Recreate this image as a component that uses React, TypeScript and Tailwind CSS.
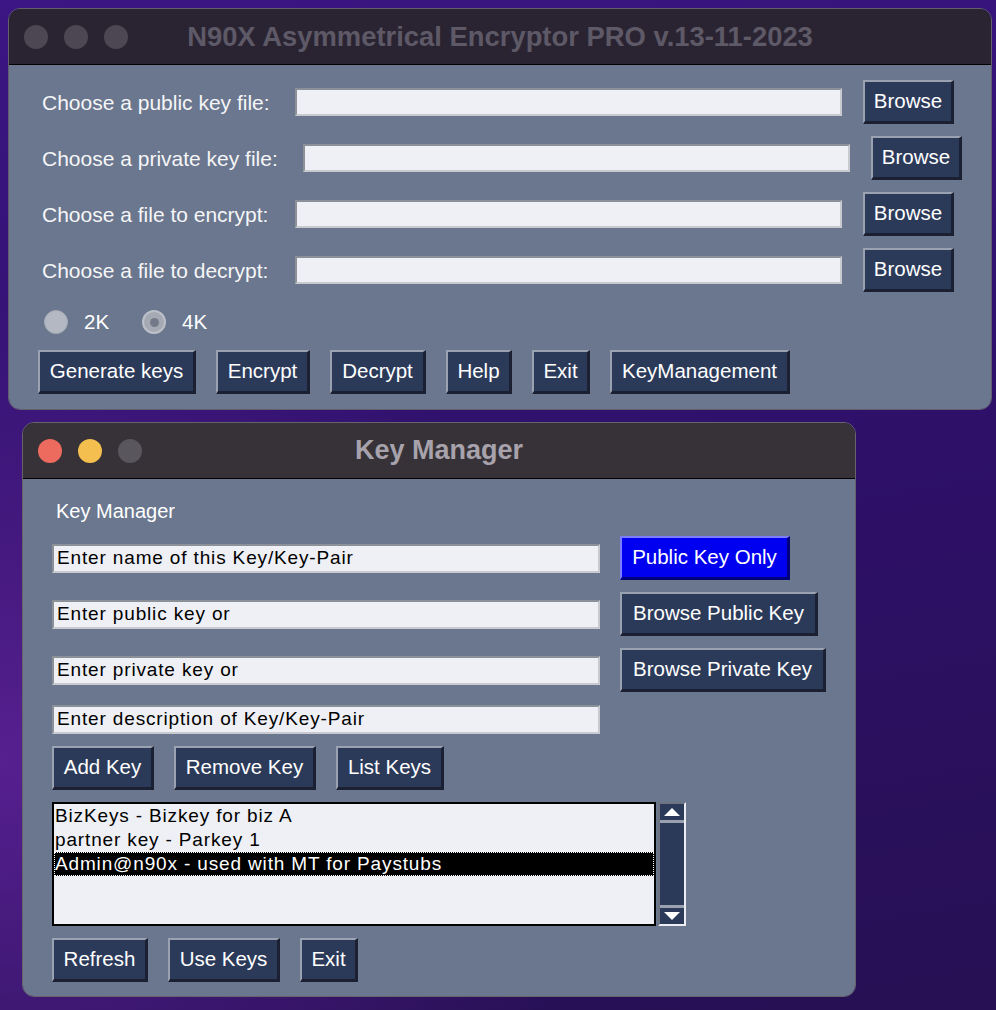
import React from "react";

const btnBase =
  "flex h-[44px] shrink-0 items-center justify-center border-t-2 border-l-2 border-b-[3px] border-r-[3px] text-[20.5px] leading-none text-white";
const navy =
  "bg-[#2c3a5a] border-t-[#9aa1b1] border-l-[#9aa1b1] border-b-[#1b2133] border-r-[#1b2133]";
const blue =
  "bg-[#0000f0] border-t-[#7d7dff] border-l-[#7d7dff] border-b-[#00007a] border-r-[#00007a]";

function TkButton({ label, w, primary }: { label: string; w: string; primary?: boolean }) {
  return <div className={`${btnBase} ${primary ? blue : navy} ${w}`}>{label}</div>;
}

function Lights({ active }: { active?: boolean }) {
  return (
    <div className="flex items-center gap-[16px] pl-[15px]">
      <div className={`h-[24px] w-[24px] rounded-full ${active ? "bg-[#ec6a5e]" : "bg-[#4c4753]"}`} />
      <div className={`h-[24px] w-[24px] rounded-full ${active ? "bg-[#f4bf4f]" : "bg-[#4c4753]"}`} />
      <div className={`h-[24px] w-[24px] rounded-full ${active ? "bg-[#5a565d]" : "bg-[#4c4753]"}`} />
    </div>
  );
}

const entry1 =
  "h-[28px] w-[547px] shrink-0 border-2 border-t-[#8c9098] border-l-[#8c9098] border-b-[#c8cad0] border-r-[#c8cad0] bg-[#eff0f5]";

function FileRow({ label, lw }: { label: string; lw: string }) {
  return (
    <div className="flex h-[44px] items-center pl-[33px]">
      <div className={`shrink-0 text-[21px] leading-none text-[#f5f5f7] ${lw}`}>{label}</div>
      <div className={entry1} />
      <div className="ml-[21px]">
        <TkButton label="Browse" w="w-[91px]" />
      </div>
    </div>
  );
}

const entry2 =
  "flex h-[29px] w-[548px] shrink-0 items-center border-2 border-t-[#8c9098] border-l-[#8c9098] border-b-[#c8cad0] border-r-[#c8cad0] bg-[#eff0f5] pl-[3px] text-[19px] tracking-[0.85px] text-black";

export default function App() {
  return (
    <div className="min-h-[1010px] w-full overflow-hidden bg-[radial-gradient(ellipse_at_0%_75%,#56208f_0%,transparent_45%),linear-gradient(170deg,#3b1684_0%,#2e1069_50%,#271053_100%)] pl-[8px] pt-[8px] font-['Liberation_Sans',Arial,sans-serif]">
      {/* Main window */}
      <div className="flex w-[984px] flex-col overflow-hidden rounded-[12px] border border-[#625e6b]">
        <div className="grid h-[56px] grid-cols-[1fr_auto_1fr] items-center border-b border-black bg-[#2a2432]">
          <Lights />
          <div className="text-[27.4px] font-bold leading-none text-[#5e5967]">
            N90X Asymmetrical Encryptor PRO v.13-11-2023
          </div>
          <div />
        </div>
        <div className="flex flex-col bg-[#6a778e] pb-[15px] pt-[15px]">
          <div className="flex flex-col gap-[12px]">
            <FileRow label="Choose a public key file:" lw="w-[253px]" />
            <FileRow label="Choose a private key file:" lw="w-[261px]" />
            <FileRow label="Choose a file to encrypt:" lw="w-[253px]" />
            <FileRow label="Choose a file to decrypt:" lw="w-[253px]" />
          </div>
          <div className="mt-[18px] flex h-[24px] items-center pl-[35px]">
            <div className="h-[24px] w-[24px] rounded-full border border-[#a6abb5] bg-[#b3b8c2]" />
            <span className="ml-[16px] w-[24px] text-[20.5px] leading-none text-white">2K</span>
            <div className="ml-[34px] flex h-[24px] w-[24px] items-center justify-center rounded-full border-2 border-[#bcc0c8] bg-[#a4a9b3]">
              <div className="h-[9px] w-[9px] rounded-full bg-[#737a89]" />
            </div>
            <span className="ml-[16px] text-[20.5px] leading-none text-white">4K</span>
          </div>
          <div className="mt-[16px] flex gap-[20px] pl-[29px]">
            <TkButton label="Generate keys" w="w-[158px]" />
            <TkButton label="Encrypt" w="w-[94px]" />
            <TkButton label="Decrypt" w="w-[96px]" />
            <TkButton label="Help" w="w-[66px]" />
            <TkButton label="Exit" w="w-[58px]" />
            <TkButton label="KeyManagement" w="w-[180px]" />
          </div>
        </div>
      </div>

      {/* Key Manager window */}
      <div className="ml-[14px] mt-[12px] flex w-[834px] flex-col overflow-hidden rounded-[12px] border border-[#67636d]">
        <div className="grid h-[56px] grid-cols-[1fr_auto_1fr] items-center border-b border-black bg-[#363237]">
          <Lights active />
          <div className="text-[27px] font-bold leading-none text-[#a7a2ab]">Key Manager</div>
          <div />
        </div>
        <div className="flex flex-col bg-[#6a778e] pb-[14px] pl-[29px] pt-[20px]">
          <div className="ml-[4px] h-[24px] text-[20px] leading-[24px] text-white">Key Manager</div>
          <div className="mt-[13px] flex flex-col gap-[12px]">
            <div className="flex h-[44px] items-center gap-[20px]">
              <div className={entry2}>Enter name of this Key/Key-Pair</div>
              <TkButton label="Public Key Only" w="w-[170px]" primary />
            </div>
            <div className="flex h-[44px] items-center gap-[20px]">
              <div className={entry2}>Enter public key or</div>
              <TkButton label="Browse Public Key" w="w-[198px]" />
            </div>
            <div className="flex h-[44px] items-center gap-[20px]">
              <div className={entry2}>Enter private key or</div>
              <TkButton label="Browse Private Key" w="w-[206px]" />
            </div>
          </div>
          <div className="mt-[13px]">
            <div className={entry2}>Enter description of Key/Key-Pair</div>
          </div>
          <div className="mt-[12px] flex gap-[20px]">
            <TkButton label="Add Key" w="w-[102px]" />
            <TkButton label="Remove Key" w="w-[142px]" />
            <TkButton label="List Keys" w="w-[108px]" />
          </div>
          <div className="mt-[12px] flex gap-[2px]">
            <div className="h-[124px] w-[604px] border-2 border-black bg-[#eff0f5] text-[19px] leading-[24px] tracking-[0.85px] text-black">
              <div className="h-[24px] pl-[1px]">BizKeys - Bizkey for biz A</div>
              <div className="h-[24px] pl-[1px]">partner key - Parkey 1</div>
              <div className="h-[24px] border border-dotted border-white bg-black leading-[22px] text-white">
                Admin@n90x - used with MT for Paystubs
              </div>
            </div>
            <div className="flex h-[124px] w-[28px] flex-col border-2 border-b-[#eceef3] border-l-[#6d7380] border-r-[#eceef3] border-t-[#6d7380] bg-[#2c3a5a]">
              <div className="flex h-[19px] items-center justify-center border-b-[3px] border-[#9aa1b1]">
                <svg width="16" height="8" viewBox="0 0 16 8">
                  <polygon points="8,0 16,8 0,8" fill="#ffffff" />
                </svg>
              </div>
              <div className="flex-1" />
              <div className="flex h-[19px] items-center justify-center border-t-[3px] border-[#9aa1b1]">
                <svg width="16" height="8" viewBox="0 0 16 8">
                  <polygon points="0,0 16,0 8,8" fill="#ffffff" />
                </svg>
              </div>
            </div>
          </div>
          <div className="mt-[12px] flex gap-[20px]">
            <TkButton label="Refresh" w="w-[96px]" />
            <TkButton label="Use Keys" w="w-[112px]" />
            <TkButton label="Exit" w="w-[58px]" />
          </div>
        </div>
      </div>
    </div>
  );
}
